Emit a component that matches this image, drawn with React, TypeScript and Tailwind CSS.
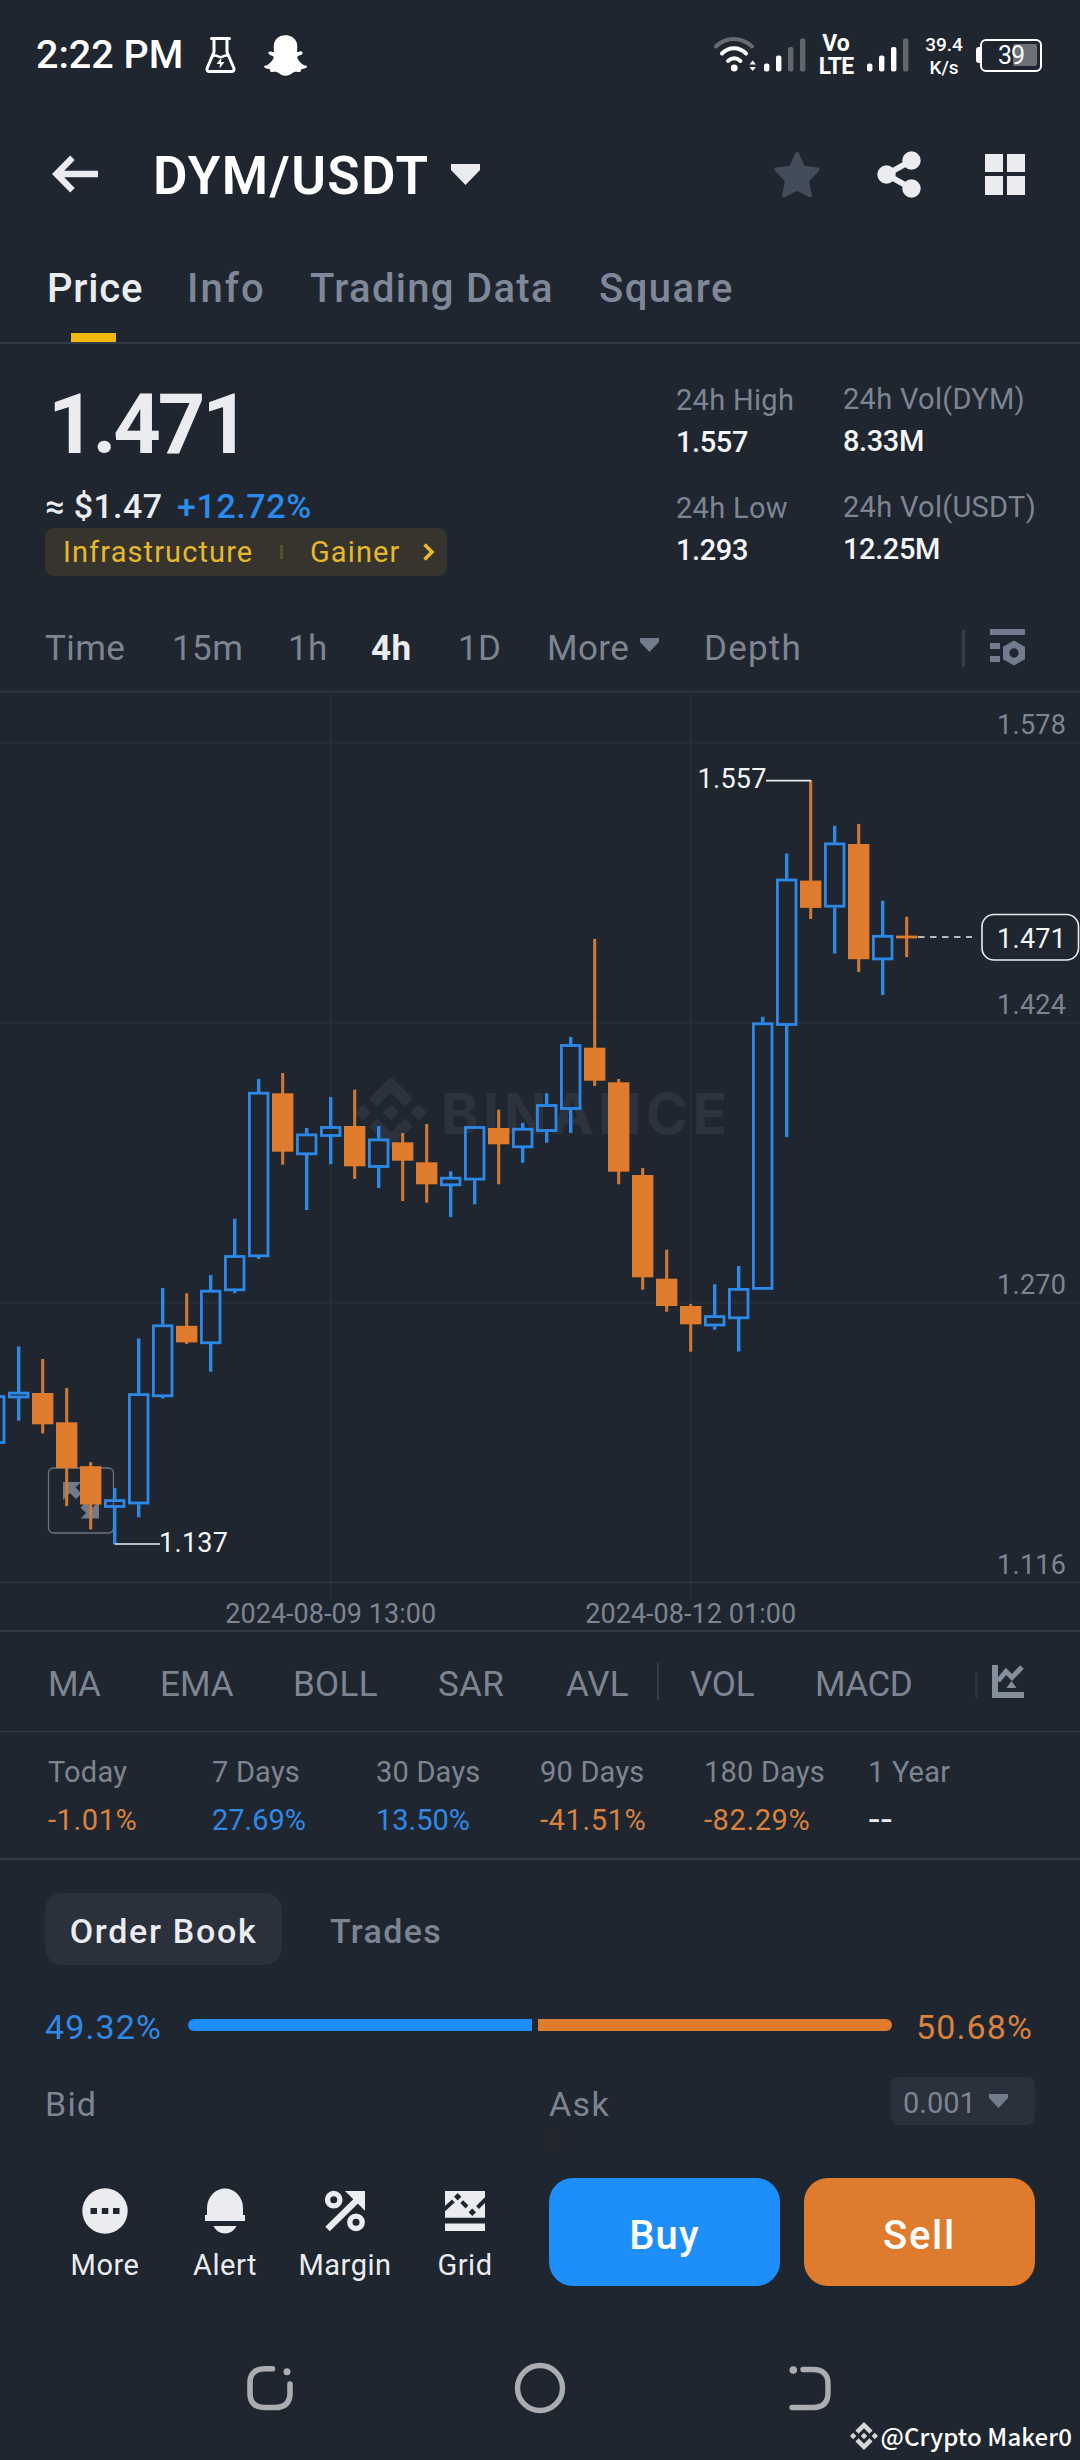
import { type ReactNode } from 'react'
import clsx from 'clsx'
import { FaSnapchatGhost } from 'react-icons/fa'

const TABS = [
  { label: 'Price', cls: 'w-[140px] tracking-[0.8px]' },
  { label: 'Info', cls: 'w-[123px] tracking-[2.1px]' },
  { label: 'Trading Data', cls: 'w-[289px] tracking-[1.3px]' },
  { label: 'Square', cls: 'tracking-[1.5px]' },
]

const INTERVALS = [
  { label: 'Time', cls: 'w-[127px]' },
  { label: '15m', cls: 'w-[116px]' },
  { label: '1h', cls: 'w-[83px]' },
  { label: '4h', cls: 'w-[87px]' },
  { label: '1D', cls: 'w-[89px]' },
]

const OVERLAYS = [
  { label: 'MA', cls: 'w-[112px] tracking-[-0.8px]' },
  { label: 'EMA', cls: 'w-[133px]' },
  { label: 'BOLL', cls: 'w-[145px] tracking-[0.3px]' },
  { label: 'SAR', cls: 'w-[128px] tracking-[0.3px]' },
  { label: 'AVL', cls: 'w-[91px]' },
]

const PERFORMANCE = [
  { label: 'Today', value: '-1.01%' },
  { label: '7 Days', value: '27.69%' },
  { label: '30 Days', value: '13.50%' },
  { label: '90 Days', value: '-41.51%' },
  { label: '180 Days', value: '-82.29%' },
  { label: '1 Year', value: '--' },
]

// [up?, high, body top, body bottom, low] in chart pixels, one every 24px
const CANDLES: [0 | 1, number, number, number, number][] = [
  [1, 1395, 1395.4, 1443.7, 1443],
  [1, 1346.4, 1391.9, 1398.2, 1420.7],
  [0, 1359, 1393, 1424.3, 1433.4],
  [0, 1387.9, 1422.3, 1468.2, 1506.1],
  [0, 1462.2, 1466.2, 1504.5, 1529.5],
  [1, 1487.9, 1499.4, 1507.7, 1544.5],
  [1, 1338.5, 1393.4, 1504.2, 1517.2],
  [1, 1287.9, 1324.6, 1397, 1398.6],
  [0, 1293.4, 1325.8, 1342.4, 1344],
  [1, 1275, 1290, 1344, 1371.7],
  [1, 1218.7, 1255.3, 1291, 1293.3],
  [1, 1079, 1092, 1257, 1259],
  [0, 1073, 1093.3, 1151.7, 1164.7],
  [1, 1128, 1133.7, 1155, 1210],
  [1, 1097, 1126.3, 1136.7, 1164.3],
  [0, 1089.7, 1126, 1166.3, 1179],
  [1, 1126, 1138.7, 1167.7, 1188],
  [0, 1133, 1142.3, 1160.7, 1201],
  [0, 1124, 1162.3, 1184.3, 1202.7],
  [1, 1171.3, 1177, 1186, 1217],
  [1, 1126.3, 1126.3, 1180.3, 1204.3],
  [0, 1109.7, 1128, 1144.3, 1184.3],
  [1, 1122.7, 1128, 1148, 1162.7],
  [1, 1093.3, 1104.3, 1131.7, 1142.7],
  [1, 1037, 1044.3, 1109.7, 1133],
  [0, 939, 1047.7, 1080.7, 1086],
  [0, 1079, 1082.3, 1171.7, 1184.3],
  [0, 1168, 1175, 1277.3, 1289.7],
  [0, 1249.7, 1278.7, 1306, 1311.7],
  [0, 1304, 1306, 1324.3, 1351.7],
  [1, 1284.2, 1315.4, 1326.2, 1329.7],
  [1, 1265.9, 1288.2, 1319, 1351.6],
  [1, 1016.8, 1022.6, 1289.6, 1289.6],
  [1, 853.4, 878.8, 1025.7, 1136.9],
  [0, 780.2, 880.6, 907.9, 919],
  [1, 825.7, 842.7, 907.4, 953.4],
  [0, 823.9, 844, 959.2, 972.1],
  [1, 900.7, 935.1, 960.1, 994.9],
  [0, 916.8, 935.6, 938.4, 957],
]

const BID_SHARE = 49.32

const BINANCE_PATH =
  'M16.624 13.9202l2.7175 2.7154-7.353 7.353-7.353-7.352 2.7175-2.7164 4.6355 4.6595 4.6356-4.6595zm4.6366-4.6366L24 12l-2.7154 2.7164L18.5682 12l2.6924-2.7164zm-9.272.001l2.7163 2.6914-2.7164 2.7174v-.001L9.2721 12l2.7164-2.7154zm-9.2722-.001L5.4088 12l-2.6914 2.6924L0 12l2.7164-2.7164zM11.9885.0115l7.353 7.329-2.7174 2.7154-4.6356-4.6356-4.6355 4.6595-2.7174-2.7154 7.353-7.353z'

function Caret({ className }: { className?: string }) {
  return (
    <svg viewBox="0 0 28 21" preserveAspectRatio="none" fill="currentColor" className={className}>
      <path d="M0 0h28v6L14 21 0 6z" />
    </svg>
  )
}

function Bars({ on }: { on: number }) {
  return (
    <svg width="42" height="34" viewBox="0 0 42 34" fill="white">
      {[8, 16, 24.5, 33].map((h, i) => (
        <rect key={h} x={i * 12} y={33.5 - h} width="5.4" height={h} rx="2" opacity={i < on ? 1 : 0.3} />
      ))}
    </svg>
  )
}

function StatusBar() {
  return (
    <div className="flex h-[110px] items-center text-white">
      <span className="ml-[36px] w-[169px] text-[39.5px] leading-none font-medium">2:22 PM</span>
      <svg width="31" height="38" viewBox="0 0 31 38" fill="none" stroke="white" strokeWidth="3" strokeLinejoin="round" strokeLinecap="round">
        <path d="M6.5 2.6h18M9 3v13L2.2 32c-.7 2 .4 3.6 2.4 3.6h21.8c2 0 3.1-1.6 2.4-3.6L22 16V3" />
        <path d="M7.5 20.5c3.5-3 6.5 1.5 9 .5s4-2.5 7-1" strokeWidth="2.4" />
        <path d="M16.5 21.5l-5 6.500h3.500l-.5 4.500 5-6.500h-3.500z" fill="white" stroke="none" />
      </svg>
      <FaSnapchatGhost className="ml-[28px] h-[43px] w-[43px]" preserveAspectRatio="none" />

      <svg className="mt-[-2px] ml-auto" width="44" height="36" viewBox="0 0 44 36" fill="none" stroke="white" strokeWidth="4" strokeLinecap="round">
        <path d="M3 10.5C13 .5 28 .5 39 10.5" opacity=".32" />
        <path d="M9 17.5c7-7 17-7 24 0" />
        <path d="M15 25c4-3.5 8.5-3.5 12.5 0" />
        <circle cx="21.2" cy="32" r="3.4" fill="white" stroke="none" />
        <path d="M36.5 28.5l3.2-4 3.2 4zM36.5 31l3.2 4 3.2-4z" fill="white" stroke="none" />
      </svg>
      <div className="ml-[7px]"><Bars on={2} /></div>
      <div className="ml-[11px] flex w-[38px] flex-col items-center text-[23px] leading-[24px] font-bold">
        <span>Vo</span>
        <span className="mt-[-1px] tracking-[-0.8px]">LTE</span>
      </div>
      <div className="ml-[12px]"><Bars on={3} /></div>
      <div className="ml-[15px] flex w-[40px] flex-col items-center pt-[3px] text-[19px] leading-[22.5px] font-medium">
        <span>39.4</span>
        <span>K/s</span>
      </div>
      <div className="mr-[38px] ml-[12px] flex items-center">
        <span className="h-[16px] w-[4px] rounded-l-[3px] bg-white" />
        <div className="relative grid h-[33px] w-[62px] place-items-center rounded-[6px] border-[2.5px] border-white">
          <span className="absolute top-[3px] right-[3px] h-[22px] w-[24px] rounded-[2px] bg-white/35" />
          <span className="relative text-[25px] leading-none tracking-[-1px]">39</span>
        </div>
      </div>
    </div>
  )
}

function TitleBar() {
  return (
    <header className="flex h-[130px] items-center text-[#eaecef]">
      <svg className="mt-[-2px] ml-[52px]" width="47" height="38" viewBox="0 0 47 38" fill="none" stroke="currentColor" strokeWidth="6.4">
        <path d="M20.5 2.7L4.5 19l16 16.3M5 19h41" />
      </svg>
      <h1 className="ml-[54px] w-[298px] pt-[2px] text-[53px] leading-none font-semibold tracking-[1.4px] text-white">DYM/USDT</h1>
      <Caret className="mt-[-2px] h-[21px] w-[29px]" />
      <svg className="mt-[-2px] mr-[57px] ml-auto" width="46" height="47" viewBox="0 0 46 47" fill="#434c5a" stroke="#434c5a" strokeWidth="4" strokeLinejoin="round">
        <path d="M23 3l6 13.5 14.5 2-10.7 11L36 44.3 23 37.6 10 44.3l3.2-14.8L2.5 18.5l14.5-2z" />
      </svg>
      <svg className="mt-[-2px] mr-[64px]" width="44" height="47" viewBox="0 0 44 47" fill="currentColor">
        <path d="M9.5 23.5L34.5 9.5M9.5 23.5l25 14" stroke="currentColor" strokeWidth="6" />
        <circle cx="9.5" cy="23.5" r="9.2" />
        <circle cx="34.5" cy="9.5" r="9.2" />
        <circle cx="34.5" cy="37.5" r="9.2" />
      </svg>
      <div className="mt-[-2px] mr-[55px] grid h-[41px] w-[40px] grid-cols-2 gap-[4.5px]">
        <i className="bg-[#eaecef]" />
        <i className="bg-[#eaecef]" />
        <i className="bg-[#eaecef]" />
        <i className="bg-[#eaecef]" />
      </div>
    </header>
  )
}

function Tabs() {
  return (
    <nav className="flex h-[104px] items-center border-b-2 border-[#333b47] pb-[4px] pl-[47px] text-[40px] leading-[48px] font-medium text-[#7f8898]">
      {TABS.map((t, i) => (
        <span key={t.label} className={clsx('relative', t.cls, i === 0 && 'text-[#eaecef]')}>
          {t.label}
          {i === 0 && <span className="absolute top-[68px] left-[24px] h-[9px] w-[45px] bg-[#f0b90b]" />}
        </span>
      ))}
    </nav>
  )
}

function Stat({ label, value }: { label: string; value: string }) {
  return (
    <div>
      <p className="text-[29px] tracking-[0.3px] text-[#7d8593]">{label}</p>
      <p className="text-[29px] font-medium tracking-[-0.4px] text-[#f3f5f7]">{value}</p>
    </div>
  )
}

function PriceBlock() {
  return (
    <section className="flex h-[262px] pt-[35px]">
      <div className="w-[676px] pt-[6px] pl-[45px]">
        <p className="pl-[3px] text-[83px] leading-[80px] font-bold tracking-[-3.2px] text-[#eaecef]">1.471</p>
        <p className="mt-[21px] flex text-[34px] leading-[40px] font-medium">
          <span className="w-[132px] tracking-[0.4px] text-[#eaecef]">≈ $1.47</span>
          <span className="tracking-[0.6px] text-[#2a8bee]">+12.72%</span>
        </p>
        <div className="mt-[2px] flex h-[48px] w-[402px] items-center rounded-[9px] bg-[#36342c] text-[29px] leading-none tracking-[1.1px] text-[#e6b82c]">
          <span className="w-[217px] pl-[18px]">Infrastructure</span>
          <span className="ml-[18px] h-[14px] w-[3px] bg-[#5a502c]" />
          <span className="ml-[27px] w-[113px]">Gainer</span>
          <svg width="12" height="18" viewBox="0 0 12 18" fill="none" stroke="currentColor" strokeWidth="3.6">
            <path d="M1.5 1.5L9 9l-7.5 7.5" />
          </svg>
        </div>
      </div>
      <div className="w-[167px] space-y-[24px] leading-[42px]">
        <Stat label="24h High" value="1.557" />
        <Stat label="24h Low" value="1.293" />
      </div>
      <div className="mt-[-1px] space-y-[24px] leading-[42px]">
        <Stat label="24h Vol(DYM)" value="8.33M" />
        <Stat label="24h Vol(USDT)" value="12.25M" />
      </div>
    </section>
  )
}

function IntervalRow() {
  return (
    <div className="flex h-[84px] items-center pl-[45px] text-[35px] leading-none tracking-[0.4px] text-[#7d8593]">
      {INTERVALS.map((it) => (
        <span key={it.label} className={clsx(it.cls, it.label === '4h' && 'font-bold text-[#eaecef]')}>{it.label}</span>
      ))}
      <span className="w-[93px]">More</span>
      <Caret className="mt-[-7px] mr-[45px] h-[14px] w-[19px] text-[#727c8d]" />
      <span className="tracking-[1.2px]">Depth</span>
      <span className="ml-auto h-[37px] w-[3px] bg-[#343c48]" />
      <svg className="mt-[-3px] mr-[54px] ml-[25px]" width="36" height="38" viewBox="0 0 36 38" fill="#727c8d">
        <path d="M0 1h35v6H0zM0 15h10v6H0zM0 28h10v6H0z" />
        <path fillRule="evenodd" d="M24 12.5l11 6.3v12.4L24 37.5l-11-6.3V18.8zM24 20.3a4.7 4.7 0 100 9.4 4.7 4.7 0 000-9.4z" />
      </svg>
    </div>
  )
}

function Chart() {
  return (
    <div className="border-t-[3px] border-[#29313d]">
      <svg className="block" width="1080" height="937" viewBox="0 693 1080 937" fontFamily="Roboto, sans-serif" fontSize="27">
        <g stroke="#262e38" strokeWidth="2">
          <path d="M0 742.5H1080M0 1022.5H1080M0 1302.5H1080M330.7 693V1600M690.7 693V1600" />
          <path d="M0 1582.4H1080" stroke="#333b45" strokeWidth="1.4" />
        </g>

        <g fill="#2c333f">
          <path d={BINANCE_PATH} transform="translate(355 1076.5) scale(3)" />
          <text x="441" y="1133.5" fontSize="57" fontWeight="700" fontFamily="Inter, sans-serif" textLength="286">BINANCE</text>
        </g>

        <rect x="48.5" y="1468" width="65" height="65" rx="5" fill="none" stroke="#6b7380" strokeWidth="1.3" />
        <path d="M63 1482h18l-5.500 5.500 6 6-5.500 5.500-6-6-7 7zM99 1518.500H80.500l5.500-5.500-5.500-5.500 5.500-5.500 6 6 7-7z" fill="#727b8a" />

        {CANDLES.map(([up, high, top, bottom, low], i) => {
          const x = 18.7 + (i - 1) * 24
          return up ? (
            <g key={i} stroke="#2d89e8" strokeWidth="2.8" fill="none">
              <path d={`M${x} ${high}V${top}M${x} ${bottom}V${low}`} strokeWidth="3.4" />
              <rect x={x - 9.3} y={top + 1.2} width="18.6" height={Math.max(bottom - top - 2.4, 1)} />
            </g>
          ) : (
            <g key={i} fill="#de7b2c">
              <rect x={x - 1.5} y={high} width="3" height={low - high} fill="#cf7b38" />
              <rect x={x - 10.7} y={top} width="21.4" height={bottom - top} />
            </g>
          )
        })}

        <g stroke="#eaecef" strokeWidth="1.6" fill="none">
          <path d="M766 780.6h45M115 1544h45" />
          <path d="M918 937h54" strokeDasharray="6.5 5.5" />
          <rect x="982" y="914.5" width="96.5" height="45.5" rx="12" />
        </g>
        <g fill="#f3f5f7">
          <text x="697.5" y="788" textLength="69">1.557</text>
          <text x="159" y="1552" textLength="69">1.137</text>
          <text x="997" y="947.5" textLength="69">1.471</text>
        </g>
        <g fill="#7d8593">
          <text x="997" y="734" textLength="69">1.578</text>
          <text x="997" y="1014" textLength="69">1.424</text>
          <text x="997" y="1294" textLength="69">1.270</text>
          <text x="997" y="1574" textLength="69">1.116</text>
          <text x="330.7" y="1622.5" textAnchor="middle" textLength="211">2024-08-09 13:00</text>
          <text x="690.7" y="1622.5" textAnchor="middle" textLength="211">2024-08-12 01:00</text>
        </g>
      </svg>
    </div>
  )
}

function Indicators() {
  return (
    <div className="flex h-[102px] items-center border-t-2 border-b border-[#333b47] pt-[6px] pl-[48px] text-[35px] leading-none text-[#7d8593]">
      {OVERLAYS.map((o) => (
        <span key={o.label} className={o.cls}>{o.label}</span>
      ))}
      <span className="mt-[-6px] h-[37px] w-[2px] bg-[#343c48]" />
      <span className="ml-[31px] w-[125px] tracking-[-0.2px]">VOL</span>
      <span className="tracking-[-0.5px]">MACD</span>
      <span className="ml-auto h-[26px] w-[3px] bg-[#2b333e]" />
      <svg className="mt-[-5px] mr-[55px] ml-[14px]" width="33" height="34" viewBox="0 0 33 34" fill="#858e9b">
        <path d="M0 0h6v27h26v6H0z" />
        <path d="M6 16l8-9.5 6 6L30 2" fill="none" stroke="#858e9b" strokeWidth="5" />
        <path d="M19.5 16l5 7h-10z" />
      </svg>
    </div>
  )
}

function Performance() {
  return (
    <div className="flex h-[128px] border-b-2 border-[#333b47] pt-[16px] pl-[48px] text-[29px] leading-[48px]">
      {PERFORMANCE.map(({ label, value }) => (
        <div key={label} className="w-[164px] whitespace-nowrap">
          <p className="tracking-[0.2px] text-[#7d8593]">{label}</p>
          <p
            className={clsx(
              value === '--' && 'scale-x-125 origin-left font-medium text-[#eaecef]',
              value !== '--' && (value.startsWith('-') ? 'tracking-[0.6px] text-[#d9823f]' : 'text-[#3089e6]'),
            )}
          >
            {value}
          </p>
        </div>
      ))}
    </div>
  )
}

function OrderBook() {
  return (
    <section className="px-[45px]">
      <div className="mt-[33px] flex h-[72px] items-center text-[34px] font-medium">
        <span className="grid h-full w-[237px] place-items-center rounded-[17px] bg-[#2a303c] pt-[4px] tracking-[1.7px] text-[#eaecef]">Order Book</span>
        <span className="ml-[48px] pt-[4px] tracking-[1.3px] text-[#7d8593]">Trades</span>
      </div>
      <div className="mt-[40px] flex h-[40px] items-center text-[34px] leading-none tracking-[1.1px]">
        <span className="w-[143px] pt-[3px] text-[#3089e6]">49.32%</span>
        <div className="flex h-[12px] flex-1 gap-[6px]">
          <span className="rounded-l-full bg-[#1e8efa]" style={{ width: `calc(${BID_SHARE}% - 3px)` }} />
          <span className="flex-1 rounded-r-full bg-[#de7b2c]" />
        </div>
        <span className="ml-[24px] w-[119px] pt-[3px] text-[#d9823f]">50.68%</span>
      </div>
      <div className="mt-[32px] flex h-[48px] items-center text-[34px] leading-none text-[#7d8593]">
        <span className="w-[504px] pt-[6px] tracking-[1.2px]">Bid</span>
        <span className="relative pt-[6px] tracking-[1.4px]">
          Ask
          <i className="absolute top-[51px] left-0 h-[16px] w-[10px] bg-[#25262c]" />
        </span>
        <div className="ml-auto flex h-[48px] w-[144px] items-center rounded-[8px] bg-[#2a303c] pl-[12px] text-[29px]">
          <span className="w-[86px] pt-[5px]">0.001</span>
          <Caret className="h-[14px] w-[19px] text-[#727c8d]" />
        </div>
      </div>
    </section>
  )
}

function Action({ label, children }: { label: string; children: ReactNode }) {
  return (
    <div className="flex w-[120px] flex-col items-center">
      <svg width="46" height="46" viewBox="0 0 46 46" fill="#eaecef">{children}</svg>
      <span className="mt-[13px] text-[29px] leading-[36px] tracking-[0.5px] text-[#eaecef]">{label}</span>
    </div>
  )
}

function BottomBar() {
  return (
    <div className="mt-[53px] flex h-[108px] pl-[45px]">
      <div className="flex w-[504px] pt-[10px]">
        <Action label="More">
          <circle cx="23" cy="23" r="22.7" />
          <path d="M8.5 20H15v6H8.500zM19.800 20h6.500v6h-6.500zM31 20h6.500v6H31z" fill="#1f262f" />
        </Action>
        <Action label="Alert">
          <path d="M5 20a18 19.5 0 0136 0v7h2v6H3v-6h2zM11.500 38h23c-2 4.500-6.500 7.500-11.500 7.500S13.500 42.500 11.500 38z" />
        </Action>
        <Action label="Margin">
          <g fill="none" stroke="#eaecef">
            <circle cx="11.7" cy="11.7" r="6.2" strokeWidth="5.4" />
            <circle cx="34" cy="34.3" r="6.2" strokeWidth="5.4" />
            <path d="M5.5 41L34 13" strokeWidth="6.4" />
          </g>
          <path d="M23 3h20v19.700z" />
        </Action>
        <Action label="Grid">
          <path d="M3 3h40v26.700H3zM3 35.500h40v7.500H3z" />
          <path d="M2 21.500l9.300-8.500M19.700 13.700l5.300 5.300M35.500 19.500L44 11" fill="none" stroke="#1f262f" strokeWidth="4" />
          <path d="M15.700 5l3.700 3.700-3.700 3.700L12 8.700zM30.300 20.600l3.700 3.700-3.700 3.700-3.700-3.700z" fill="#1f262f" />
        </Action>
      </div>
      <button className="h-full w-[231px] rounded-[24px] bg-[#1e8efa] pt-[7px] text-[40px] font-medium tracking-[1.2px] text-white">Buy</button>
      <button className="ml-[24px] h-full w-[231px] rounded-[24px] bg-[#de7b2c] pt-[7px] text-[40px] font-medium tracking-[1.7px] text-white">Sell</button>
    </div>
  )
}

function SystemNav() {
  return (
    <div className="relative flex h-[174px] items-center justify-between px-[247px] pt-[30px]">
      <svg className="mt-[-1px]" width="48" height="50" viewBox="0 0 48 50" fill="none" stroke="#abadb0" strokeWidth="5.6" strokeLinecap="round">
        <path d="M25.5 5.7H18C8 5.700 3 11 3 19.500v11C3 40 8.500 44.500 18 44.500h10c9.500 0 15-4.500 15-14V21" />
        <circle cx="40" cy="8.7" r="3.5" fill="#abadb0" stroke="none" />
      </svg>
      <svg className="mr-[4px]" width="52" height="52" viewBox="0 0 52 52" fill="none" stroke="#abadb0" strokeWidth="5.4">
        <circle cx="26" cy="26" r="22.5" />
      </svg>
      <svg width="44" height="50" viewBox="0 0 44 50" fill="none" stroke="#abadb0" strokeWidth="5.4" strokeLinecap="round">
        <path d="M14 6.5h10c10 0 15 5 15 14V30c0 9.500-5 14.500-15 14.500H3" />
        <circle cx="4.3" cy="7" r="3.8" fill="#abadb0" stroke="none" />
      </svg>
      <div className="absolute right-[8px] bottom-[7px] flex items-center gap-[3px] text-white">
        <svg width="28" height="28" viewBox="0 0 24 24" fill="#d5d7da"><path d={BINANCE_PATH} /></svg>
        <span className="font-['Noto_Sans_CJK_SC','Noto_Sans',sans-serif] text-[24px] leading-[34px] font-medium tracking-[0.1px]">@Crypto Maker0</span>
      </div>
    </div>
  )
}

export default function App() {
  return (
    <div className="h-[2460px] w-[1080px] overflow-hidden bg-[#1f262f] font-[Roboto,sans-serif]">
      <StatusBar />
      <TitleBar />
      <Tabs />
      <PriceBlock />
      <IntervalRow />
      <Chart />
      <Indicators />
      <Performance />
      <OrderBook />
      <BottomBar />
      <SystemNav />
    </div>
  )
}
